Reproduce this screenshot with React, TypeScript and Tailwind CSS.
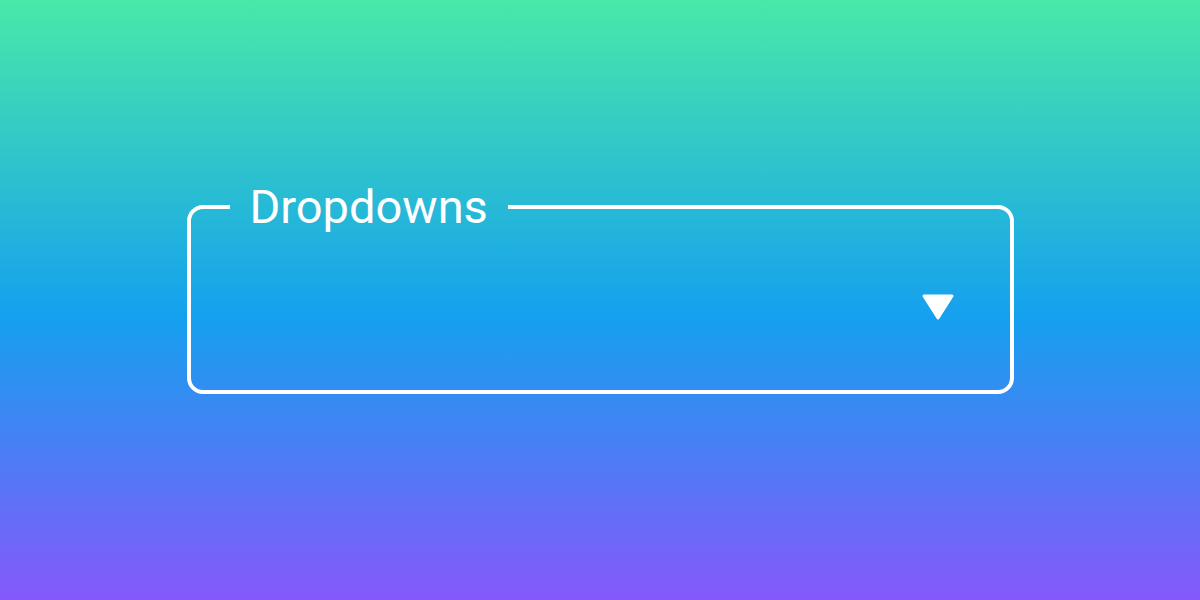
import React from "react";

// Outlined select field with a floating label notched into the border
function DropdownField({ label }: { label: string }) {
  return (
    <fieldset className="m-0 h-[211px] w-[827px] rounded-2xl border-4 border-white px-0 pb-0 pt-0">
      <legend className="ml-[39px] px-5 text-[47px] font-normal leading-none text-white">
        {label}
      </legend>
      <div className="flex h-[159px] items-center justify-end pr-[55px] pb-[6px]">
        <svg width="34" height="28" viewBox="0 0 34 28" fill="white">
          <polygon
            points="3,3 31,3 17,25"
            stroke="white"
            strokeWidth="3"
            strokeLinejoin="round"
          />
        </svg>
      </div>
    </fieldset>
  );
}

export default function App() {
  return (
    <div
      className="flex h-[600px] w-full justify-center bg-linear-to-b/srgb from-[#48e9a8] via-[#15a0ef] via-53% to-[#8658fb] pt-[183px]"
      style={{ fontFamily: "Roboto, 'Liberation Sans', sans-serif" }}
    >
      <div>
        <DropdownField label="Dropdowns" />
      </div>
    </div>
  );
}
